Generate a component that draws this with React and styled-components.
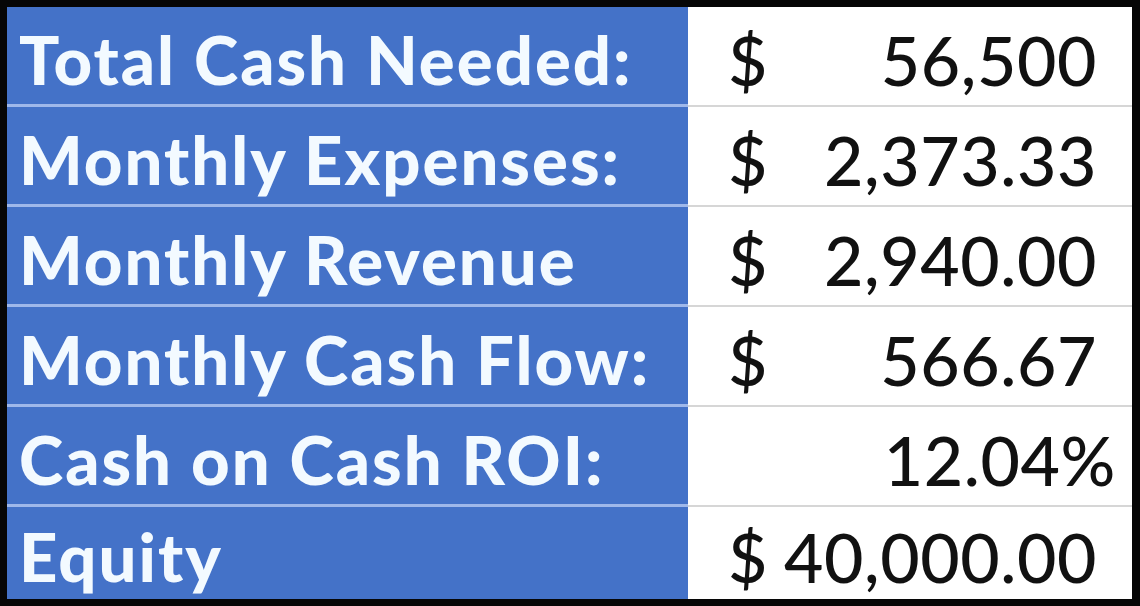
import React from "react";
import styled, { createGlobalStyle } from "styled-components";

const Global = createGlobalStyle`
  html, body { margin: 0; padding: 0; background: #050505; }
  body { width: 1140px; height: 606px; overflow: hidden; }
`;

const Frame = styled.div`
  width: 1140px;
  height: 606px;
  box-sizing: border-box;
  padding: 7px 8px 7px 7px;
  background: #060606;
`;

const Table = styled.div`
  display: grid;
  grid-template-columns: 681px 1fr;
  grid-template-rows: repeat(5, 100px) 1fr;
  height: 100%;
  background: #fff;
`;

const Label = styled.div`
  display: flex;
  align-items: center;
  box-sizing: border-box;
  padding: 7px 0 0 12px;
  background: #4472c8;
  border-bottom: ${(p) => (p.$last ? "none" : "3px solid #9fb8ea")};
  color: #f3faff;
  font-family: Lato, "Open Sans", sans-serif;
  font-weight: 900;
  font-size: 67px;
  letter-spacing: 2px;
  line-height: 1;
  white-space: nowrap;
`;

const Value = styled.div`
  display: flex;
  align-items: center;
  justify-content: ${(p) => (p.$pct ? "flex-end" : "space-between")};
  gap: 14px;
  box-sizing: border-box;
  padding: 7px ${(p) => (p.$pct ? "16px" : "35px")} 0 40px;
  border-bottom: ${(p) => (p.$last ? "none" : "2px solid #d6d6d6")};
  color: #111;
  font-family: Lato, "Open Sans", sans-serif;
  font-weight: 500;
  font-size: 68px;
  letter-spacing: 0.6px;
  line-height: 1;
  white-space: nowrap;
`;

const Amount = styled.span``;

const rows = [
  { label: "Total Cash Needed:", value: "56,500", dollar: true },
  { label: "Monthly Expenses:", value: "2,373.33", dollar: true },
  { label: "Monthly Revenue", value: "2,940.00", dollar: true },
  { label: "Monthly Cash Flow:", value: "566.67", dollar: true },
  { label: "Cash on Cash ROI:", value: "12.04%", pct: true },
  { label: "Equity", value: "40,000.00", dollar: true },
];

export default function App() {
  return (
    <>
      <Global />
      <Frame>
        <Table>
          {rows.map((r, i) => {
            const last = i === rows.length - 1;
            return (
              <React.Fragment key={r.label}>
                <Label $last={last}>{r.label}</Label>
                <Value $last={last} $pct={r.pct}>
                  {r.dollar && <Amount>$</Amount>}
                  <Amount>{r.value}</Amount>
                </Value>
              </React.Fragment>
            );
          })}
        </Table>
      </Frame>
    </>
  );
}
